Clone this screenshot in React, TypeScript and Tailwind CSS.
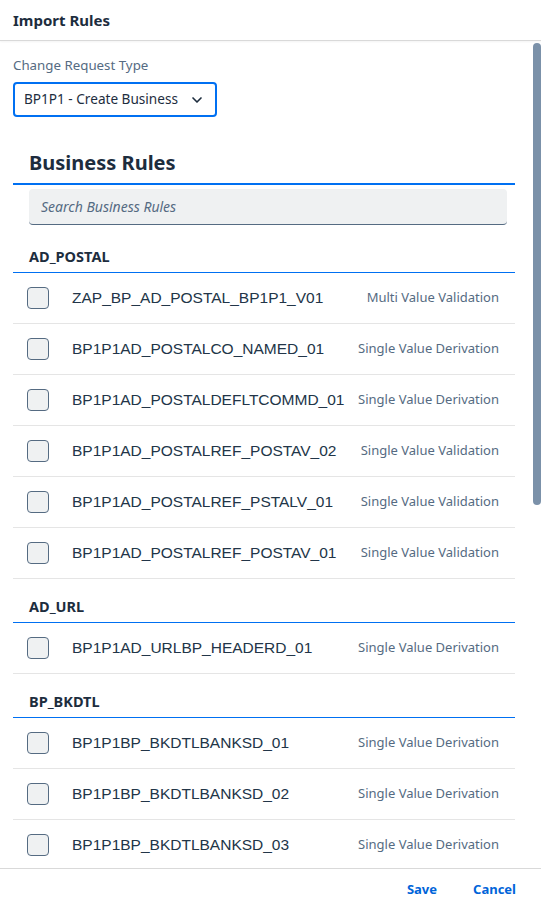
import { ChevronDown } from 'lucide-react'

type Rule = { name: string; type: string }
type Group = { title: string; rules: Rule[] }

const groups: Group[] = [
  {
    title: 'AD_POSTAL',
    rules: [
      { name: 'ZAP_BP_AD_POSTAL_BP1P1_V01', type: 'Multi Value Validation' },
      { name: 'BP1P1AD_POSTALCO_NAMED_01', type: 'Single Value Derivation' },
      { name: 'BP1P1AD_POSTALDEFLTCOMMD_01', type: 'Single Value Derivation' },
      { name: 'BP1P1AD_POSTALREF_POSTAV_02', type: 'Single Value Validation' },
      { name: 'BP1P1AD_POSTALREF_PSTALV_01', type: 'Single Value Validation' },
      { name: 'BP1P1AD_POSTALREF_POSTAV_01', type: 'Single Value Validation' },
    ],
  },
  {
    title: 'AD_URL',
    rules: [{ name: 'BP1P1AD_URLBP_HEADERD_01', type: 'Single Value Derivation' }],
  },
  {
    title: 'BP_BKDTL',
    rules: [
      { name: 'BP1P1BP_BKDTLBANKSD_01', type: 'Single Value Derivation' },
      { name: 'BP1P1BP_BKDTLBANKSD_02', type: 'Single Value Derivation' },
      { name: 'BP1P1BP_BKDTLBANKSD_03', type: 'Single Value Derivation' },
    ],
  },
]

function RuleRow({ rule }: { rule: Rule }) {
  return (
    <div className="h-[51px] shrink-0 flex items-center border-b border-[#e5e5e5]">
      <div className="ml-[14px] w-[22px] h-[22px] rounded-[4px] border border-[#556b82] bg-[#eff1f2]" />
      <span
        className="ml-[23px] text-[15.5px] text-[#223548]"
        style={{ fontFamily: '"Liberation Sans", Arial, sans-serif' }}
      >
        {rule.name}
      </span>
      <span className="ml-auto mr-[16px] text-[13px] text-[#556b82]">{rule.type}</span>
    </div>
  )
}

export default function App() {
  return (
    <div
      className="h-screen flex flex-col bg-white overflow-hidden"
      style={{ fontFamily: '"Noto Sans", "Open Sans", sans-serif' }}
    >
      {/* header */}
      <div className="h-[41px] shrink-0 flex items-center px-[13px] border-b border-[#d9d9d9] shadow-[0_1px_2px_rgba(0,0,0,0.05)]">
        <h1 className="text-[15px] font-bold text-[#1d2d3e]">Import Rules</h1>
      </div>

      {/* body */}
      <div className="flex-1 flex overflow-hidden">
        <div className="flex-1 flex flex-col pl-[13px] pr-[18px] overflow-hidden">
          <label className="mt-[15px] text-[13.3px] text-[#556b82] leading-[18px]">Change Request Type</label>
          <button className="mt-[8px] w-[204px] h-[35px] shrink-0 flex items-center justify-between pl-[9px] pr-[10px] border-2 border-[#0070f2] rounded-[4px] text-[13.6px] text-[#1d2d3e]">
            <span>BP1P1 - Create Business</span>
            <ChevronDown size={16} strokeWidth={2.5} />
          </button>

          <div className="mt-[26px] h-[42px] shrink-0 flex items-center pl-[16px] border-b-2 border-[#0070f2]">
            <h2 className="text-[20px] font-bold text-[#1d2d3e]">Business Rules</h2>
          </div>
          <div className="mt-[4px] ml-[16px] mr-[8px] h-[36px] shrink-0 flex items-center px-[12px] bg-[#eff1f2] rounded-[4px] border-b border-[#556b82]">
            <span className="text-[14px] italic text-[#556b82]">Search Business Rules</span>
          </div>

          {groups.map((g, i) => (
            <div key={g.title} className="flex flex-col shrink-0">
              <div
                className={
                  'shrink-0 flex items-end pl-[16px] pb-[4px] border-b border-[#0070f2] ' +
                  (i === 0 ? 'h-[48px]' : 'h-[44px]')
                }
              >
                <span className="text-[14.5px] font-bold text-[#1d2d3e]">{g.title}</span>
              </div>
              {g.rules.map((r) => (
                <RuleRow key={r.name} rule={r} />
              ))}
            </div>
          ))}
        </div>

        {/* scrollbar */}
        <div className="w-[8px] shrink-0">
          <div className="mt-[2px] h-[462px] rounded-full bg-[#7b91a9]" />
        </div>
      </div>

      {/* footer */}
      <div className="h-[39px] shrink-0 flex items-center justify-end gap-[36px] pr-[25px] pt-[4px] border-t border-[#d9d9d9]">
        <button className="text-[13px] font-bold text-[#0064d9]">Save</button>
        <button className="text-[13px] font-bold text-[#0064d9]">Cancel</button>
      </div>
    </div>
  )
}
